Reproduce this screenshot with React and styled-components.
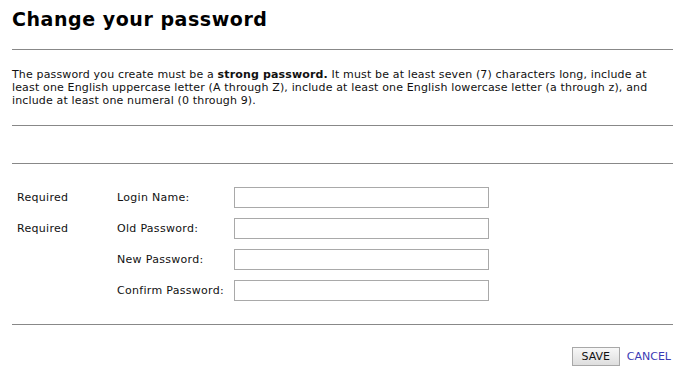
import React from 'react';
import styled, { createGlobalStyle } from 'styled-components';

const GlobalStyle = createGlobalStyle`
  body {
    margin: 0;
    background: #fff;
    font-family: "DejaVu Sans", Verdana, sans-serif;
    color: #000;
  }
`;

const Page = styled.div`
  padding: 0 8px 0 12px;
`;

const Title = styled.h1`
  font-size: 19px;
  font-weight: bold;
  margin: 0;
  padding-top: 8px;
  height: 49px;
  box-sizing: border-box;
  letter-spacing: 0.55px;
`;

const Rule = styled.hr`
  border: none;
  border-top: 1px solid #888;
  height: 0;
  margin: ${p => p.$gap || '0'};
`;

const Intro = styled.p`
  font-size: 11px;
  letter-spacing: 0.15px;
  line-height: 13px;
  margin: 18px 0 0;
  height: 57px;
  max-width: 658px;
  color: #111;
`;

const Form = styled.div`
  display: flex;
  flex-direction: column;
  gap: 10px;
  padding-top: 23px;
  padding-bottom: 23px;
`;

const Row = styled.div`
  display: grid;
  grid-template-columns: 100px 117px 255px;
  align-items: center;
  padding-left: 5px;
  font-size: 11px;
  letter-spacing: 0.3px;
  color: #111;
`;

const Field = styled.input`
  box-sizing: border-box;
  width: 255px;
  height: 21px;
  border: 1px solid #a9a9a9;
  margin: 0;
  padding: 0 4px;
  font: inherit;
`;

const Actions = styled.div`
  display: flex;
  justify-content: flex-end;
  align-items: center;
  gap: 7px;
  padding-top: 22px;
  padding-right: 2px;
`;

const Button = styled.button`
  box-sizing: border-box;
  height: 19px;
  width: 48px;
  padding: 0;
  border: 1px solid #a8a8a8;
  background: linear-gradient(#f7f7f7, #dedede);
  font-family: "DejaVu Sans", Verdana, sans-serif;
  font-size: 11px;
  color: #111;
`;

const CancelLink = styled.a`
  color: #3a3ab4;
  font-size: 11px;
  text-decoration: none;
  cursor: pointer;
`;

const fields = [
  { req: true, label: 'Login Name:' },
  { req: true, label: 'Old Password:' },
  { req: false, label: 'New Password:' },
  { req: false, label: 'Confirm Password:' },
];

export default function App() {
  return (
    <>
      <GlobalStyle />
      <Page>
        <Title>Change your password</Title>
        <Rule />
        <Intro>
          The password you create must be a <b>strong password.</b> It must be at least seven (7) characters long, include at
          least one English uppercase letter (A through Z), include at least one English lowercase letter (a through z), and
          include at least one numeral (0 through 9).
        </Intro>
        <Rule />
        <Rule $gap="37px 0 0" />
        <Form>
          {fields.map(f => (
            <Row key={f.label}>
              <span>{f.req ? 'Required' : ''}</span>
              <span>{f.label}</span>
              <Field type={f.label.includes('Password') ? 'password' : 'text'} />
            </Row>
          ))}
        </Form>
        <Rule />
        <Actions>
          <Button>SAVE</Button>
          <CancelLink>CANCEL</CancelLink>
        </Actions>
      </Page>
    </>
  );
}
